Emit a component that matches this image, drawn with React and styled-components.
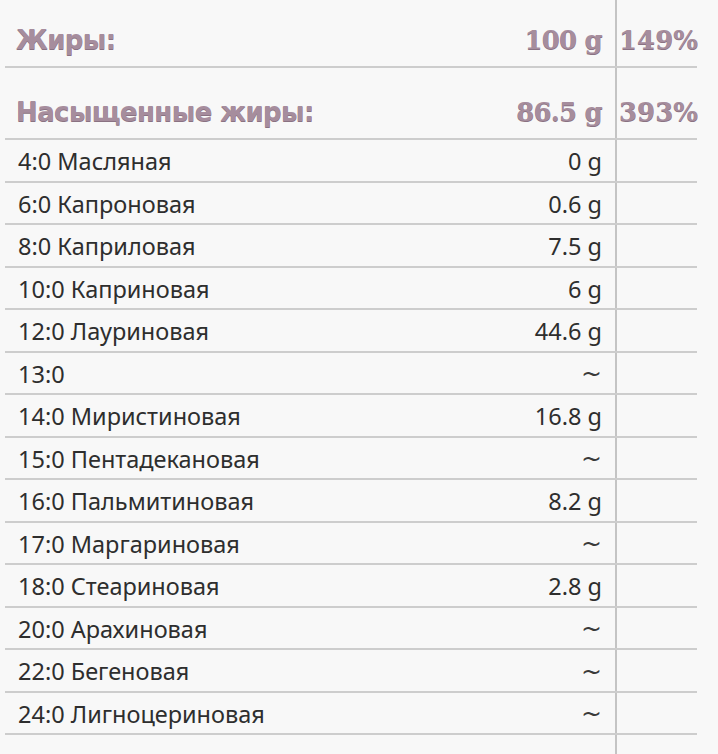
import React from 'react';
import styled, { createGlobalStyle } from 'styled-components';

const GlobalStyle = createGlobalStyle`
  html, body {
    margin: 0;
    padding: 0;
    background: #f8f8f8;
  }
  body {
    font-family: "Noto Sans", "DejaVu Sans", sans-serif;
    overflow: hidden;
  }
`;

const Table = styled.div`
  width: 692px;
  margin-left: 5px;
  display: flex;
  flex-direction: column;
`;

const Row = styled.div`
  display: grid;
  grid-template-columns: 612px 80px;
  height: ${(p) => p.$height}px;
  border-bottom: ${(p) => (p.$last ? 'none' : '2px solid #cdcdcd')};
`;

const NameCell = styled.div`
  display: flex;
  justify-content: space-between;
  align-items: ${(p) => (p.$head ? 'flex-end' : 'center')};
  padding: 0 13px 0 ${(p) => (p.$head ? 11 : 13)}px;
  padding-bottom: ${(p) => (p.$head ? 11 : 0)}px;
  border-right: 2px solid #c4c4c4;
`;

const PctCell = styled.div`
  display: flex;
  align-items: flex-end;
  padding: 0 0 11px 2px;
  white-space: nowrap;
  overflow: visible;
`;

const HeadLabel = styled.span`
  font-family: "DejaVu Sans", sans-serif;
  font-weight: bold;
  font-size: 26px;
  letter-spacing: -0.6px;
  color: #a68d9d;
  text-shadow: 0 1px 0 #8a7282;
`;

const HeadValue = styled.span`
  font-family: "DejaVu Serif", serif;
  font-weight: bold;
  font-size: 26px;
  letter-spacing: ${(p) => (p.$pct ? '0px' : '-0.8px')};
  color: #a68d9d;
  text-shadow: 0 1px 0 #8a7282;
  white-space: nowrap;
`;

const Label = styled.span`
  font-size: 23.5px;
  color: #2e2e2e;
  position: relative;
  top: 1px;
`;

const Value = styled.span`
  font-size: 23.5px;
  color: #2e2e2e;
  white-space: nowrap;
  position: relative;
  top: 1px;
`;

const Tilde = styled.span`
  font-family: "DejaVu Sans", sans-serif;
  font-size: 25px;
  color: #3a3a3a;
  position: relative;
  top: 1px;
`;

const heads = [
  { name: 'Жиры:', value: '100 g', pct: '149%', h: 66 },
  { name: 'Насыщенные жиры:', value: '86.5 g', pct: '393%', h: 70 },
];

const acids = [
  ['4:0 Масляная', '0 g'],
  ['6:0 Капроновая', '0.6 g'],
  ['8:0 Каприловая', '7.5 g'],
  ['10:0 Каприновая', '6 g'],
  ['12:0 Лауриновая', '44.6 g'],
  ['13:0', '~'],
  ['14:0 Миристиновая', '16.8 g'],
  ['15:0 Пентадекановая', '~'],
  ['16:0 Пальмитиновая', '8.2 g'],
  ['17:0 Маргариновая', '~'],
  ['18:0 Стеариновая', '2.8 g'],
  ['20:0 Арахиновая', '~'],
  ['22:0 Бегеновая', '~'],
  ['24:0 Лигноцериновая', '~'],
];

export default function App() {
  return (
    <>
      <GlobalStyle />
      <Table>
        {heads.map((r) => (
          <Row key={r.name} $height={r.h}>
            <NameCell $head>
              <HeadLabel>{r.name}</HeadLabel>
              <HeadValue>{r.value}</HeadValue>
            </NameCell>
            <PctCell>
              <HeadValue $pct>{r.pct}</HeadValue>
            </PctCell>
          </Row>
        ))}
        {acids.map(([name, value]) => (
          <Row key={name} $height={40.5}>
            <NameCell>
              <Label>{name}</Label>
              {value === '~' ? <Tilde>~</Tilde> : <Value>{value}</Value>}
            </NameCell>
            <PctCell />
          </Row>
        ))}
        <Row $height={40} $last>
          <NameCell />
          <PctCell />
        </Row>
      </Table>
    </>
  );
}
